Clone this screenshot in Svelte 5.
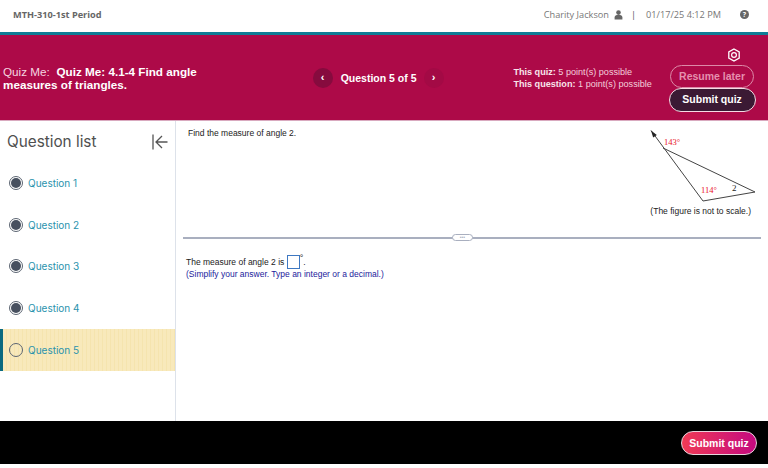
<script>
    const questions = [
        { label: 'Question 1', done: true },
        { label: 'Question 2', done: true },
        { label: 'Question 3', done: true },
        { label: 'Question 4', done: true },
        { label: 'Question 5', done: false }
    ];
</script>

<div class="page">
    <header class="topbar">
        <span class="course">MTH-310-1st Period</span>
        <div class="user">
            <span>Charity Jackson</span>
            <svg class="person" width="9" height="10" viewBox="0 0 9 10"><circle cx="4.5" cy="2.6" r="2.3" fill="#666" /><path d="M0.6 9.4V7.4C0.6 5.9 1.7 5 3 5H6C7.3 5 8.4 5.9 8.4 7.4V9.4Z" fill="#666" /></svg>
            <span class="sep">|</span>
            <span>01/17/25 4:12 PM</span>
            <span class="help">?</span>
        </div>
    </header>

    <section class="banner">
        <div class="title"><span class="prefix">Quiz Me:</span> <b>Quiz Me: 4.1-4 Find angle measures of triangles.</b></div>
        <div class="nav">
            <span class="arrow prev">‹</span>
            <b>Question 5 of 5</b>
            <span class="arrow next">›</span>
        </div>
        <div class="points">
            <div><b>This quiz:</b> 5 point(s) possible</div>
            <div><b>This question:</b> 1 point(s) possible</div>
        </div>
        <div class="actions">
            <svg width="14" height="14" viewBox="0 0 14 14" fill="none" stroke="#fff"><path d="M7 1L12.2 4V10L7 13L1.8 10V4Z" stroke-width="1.3" /><circle cx="7" cy="7" r="2.4" stroke-width="1.2" /></svg>
            <span class="resume">Resume later</span>
            <span class="submit-dark">Submit quiz</span>
        </div>
    </section>

    <div class="body">
        <aside class="sidebar">
            <div class="side-head">
                <h2>Question list</h2>
                <svg width="18" height="18" viewBox="0 0 18 18" fill="none" stroke="#555" stroke-width="1.3"><path d="M2 1.5V16.5M16.5 9H5M11 3L5 9L11 15" /></svg>
            </div>
            <ul>
                {#each questions as q}
                    <li class:current={!q.done}>
                        <span class="radio" class:done={q.done}></span>
                        <span>{q.label}</span>
                    </li>
                {/each}
            </ul>
        </aside>

        <main class="content">
            <div class="top-pane">
                <p class="ask">Find the measure of angle 2.</p>
                <figure>
                    <svg width="112" height="79" viewBox="0 0 112 79">
                        <path d="M6 3.5L58 74L110 65L18 21" fill="none" stroke="#444" stroke-width="1" />
                        <path d="M6 3.5L11.8 7.9L8.2 10.5Z" fill="#222" />
                        <text x="19" y="18" class="red">143°</text>
                        <text x="56" y="66" class="red">114°</text>
                        <text x="87" y="64" class="two">2</text>
                    </svg>
                    <figcaption>(The figure is not to scale.)</figcaption>
                </figure>
            </div>
            <div class="divider"><span class="grip">•••</span></div>
            <div class="answer">
                <div>The measure of angle 2 is <span class="box"></span><sup>°</sup>.</div>
                <div class="hint">(Simplify your answer. Type an integer or a decimal.)</div>
            </div>
        </main>
    </div>

    <footer class="footer">
        <span class="submit-bright">Submit quiz</span>
    </footer>
</div>

<style>
    :global(body) { margin: 0; background: #fff; }

    .page {
        width: 768px;
        height: 468px;
        display: flex;
        flex-direction: column;
        overflow: hidden;
        font-family: "Liberation Sans", Arial, sans-serif;
    }

    .topbar {
        height: 35px;
        box-sizing: border-box;
        padding: 0 19px 3px 13px;
        display: flex;
        justify-content: space-between;
        align-items: center;
        font-family: "Open Sans", sans-serif;
        font-size: 9.2px;
        color: #777;
        border-bottom: 3px solid #0e7c96;
    }
    .course { font-weight: 700; color: #666; }
    .user { display: flex; align-items: center; }
    .person { margin-left: 5px; }
    .sep { margin: 0 10px 0 8px; color: #555; }
    .help {
        margin-left: 19px;
        width: 9px;
        height: 9px;
        border-radius: 50%;
        background: #666;
        color: #fff;
        font-size: 7px;
        font-weight: 700;
        line-height: 9px;
        text-align: center;
    }

    .banner {
        height: 85px;
        background: #ad0a48;
        color: #fff;
        display: flex;
        align-items: center;
        box-sizing: border-box;
        padding: 0 12px 0 3px;
    }
    .title { width: 223px; margin-right: 87px; font-size: 11.7px; line-height: 13px; }
    .prefix { color: #f5d5e0; margin-right: 3.5px; }
    .nav { display: flex; align-items: center; font-size: 10.5px; width: 200px; }
    .nav b { margin: 0 7px 0 8px; }
    .arrow {
        width: 20px;
        height: 20px;
        border-radius: 50%;
        text-align: center;
        line-height: 18px;
        font-size: 11px;
        font-weight: 700;
    }
    .prev { background: #860b3e; }
    .next { background: #a30a45; }
    .points { width: 156px; padding-left: 1px; box-sizing: border-box; font-size: 9.1px; line-height: 12px; color: #f3cfdb; }
    .points b { color: #f8e4eb; }
    .actions { width: 88px; display: flex; flex-direction: column; align-items: center; margin-top: 5px; }
    .actions svg { margin: 0 15px 3px 0; align-self: flex-end; }
    .resume {
        width: 84px;
        height: 23px;
        box-sizing: border-box;
        border: 1px solid #dd8aa8;
        border-radius: 12px;
        text-align: center;
        font-size: 10.5px;
        font-weight: 700;
        line-height: 21px;
        color: #e58fae;
    }
    .submit-dark {
        width: 87px;
        height: 24px;
        box-sizing: border-box;
        border: 1.5px solid #f6dce5;
        border-radius: 12px;
        background: #3b1a34;
        text-align: center;
        font-size: 10.5px;
        font-weight: 700;
        line-height: 21px;
    }

    .body { height: 301px; display: flex; border-top: 1px solid #d9a9bf; box-sizing: border-box; }
    .sidebar { width: 176px; flex: none; box-sizing: border-box; border-right: 1px solid #dde2ea; }
    .side-head {
        display: flex;
        justify-content: space-between;
        align-items: center;
        height: 41px;
        padding: 0 6.5px 0 7px;
    }
    h2 { margin: 0; font-size: 15.3px; font-weight: 400; color: #4f4f4f; font-family: Inter, sans-serif; }
    ul { list-style: none; margin: 0; padding: 0; }
    li {
        height: 41.8px;
        display: flex;
        align-items: center;
        padding-left: 9px;
        box-sizing: border-box;
        font-size: 10px;
        font-family: Inter, sans-serif;
        color: #2b93ad;
        gap: 5px;
    }
    li.current {
        height: 42px;
        background: repeating-linear-gradient(90deg, #f8e9bb 0 3px, #f5e4ae 3px 4px);
        border-left: 3px solid #0a6a80;
        padding-left: 6px;
    }
    .radio {
        width: 14px;
        height: 14px;
        box-sizing: border-box;
        border: 1.5px solid #5c6572;
        border-radius: 50%;
        position: relative;
    }
    .radio.done::after {
        content: '';
        position: absolute;
        inset: 1px;
        border-radius: 50%;
        background: #47505f;
    }

    .content { flex: 1; min-width: 0; font-size: 8.5px; color: #222; }
    .top-pane { height: 112px; display: flex; justify-content: space-between; padding: 0 17px 0 12px; }
    .ask { margin: 7px 0 0; }
    figure { margin: 6px 0 0; width: 104px; display: flex; flex-direction: column; align-items: flex-end; }
    figure svg { margin-right: -6px; display: block; flex: none; }
    figcaption { white-space: nowrap; }
    .red { fill: #e8141e; font: 8.5px "Liberation Serif", serif; }
    .two { fill: #222; font: 9px "Liberation Serif", serif; }

    .divider { margin: 4px 7px 0; height: 1.5px; background: #a9afbf; position: relative; }
    .grip {
        position: absolute;
        left: 269px;
        top: -3px;
        width: 21px;
        height: 7px;
        box-sizing: border-box;
        background: #fff;
        border: 1px solid #a9afbf;
        border-radius: 4px;
        font-size: 5px;
        line-height: 5px;
        text-align: center;
        color: #a9afbf;
    }
    .answer { padding: 16.5px 10px; line-height: 12px; }
    .box {
        display: inline-block;
        width: 13px;
        height: 14px;
        box-sizing: border-box;
        border: 1px solid #3e78c2;
        vertical-align: -4px;
    }
    sup { font-size: 9px; line-height: 0; }
    .hint { color: #1b1b9c; margin-top: -1px; }

    .footer {
        height: 43px;
        flex: none;
        background: #000;
        display: flex;
        justify-content: flex-end;
        align-items: center;
        padding: 0 11px;
    }
    .submit-bright {
        width: 76px;
        height: 24px;
        box-sizing: border-box;
        border: 1px solid #e7d5dc;
        border-radius: 12px;
        background: linear-gradient(90deg, #f03a55, #c40a80);
        color: #fff;
        text-align: center;
        font-size: 10.5px;
        font-weight: 700;
        line-height: 22px;
    }
</style>
